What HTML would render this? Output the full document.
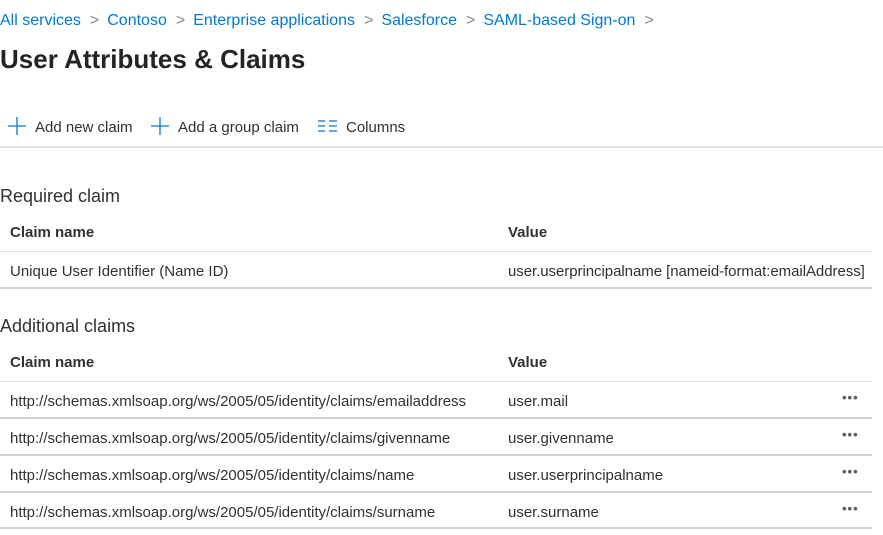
<!DOCTYPE html>
<html><head><meta charset="utf-8"><style>
body{margin:0;width:883px;height:535px;background:#fff;font-family:"Liberation Sans",sans-serif;color:#323130;position:relative;overflow:hidden}
.a{position:absolute;white-space:nowrap;line-height:1}
.bc{top:13px;font-size:16px;color:#0078d4}
.sep{color:#8a8886;margin:0 8px 0 9px}
.t{font-size:15px}
.h{font-size:15px;font-weight:bold}
.l{position:absolute;left:0;width:872px;height:1px;background:#e1dfdd}
.ld{position:absolute;left:0;width:872px;height:2px;background:#d2d0ce}
.dots{position:absolute;left:842px;font-size:13px;letter-spacing:1px;color:#605e5c;font-weight:bold}
</style></head><body>
<div class="a bc" style="left:0">All services<span class="sep">&gt;</span>Contoso<span class="sep">&gt;</span>Enterprise applications<span class="sep">&gt;</span>Salesforce<span class="sep">&gt;</span>SAML-based Sign-on<span class="sep">&gt;</span></div>
<div class="a" style="left:0;top:46px;font-size:26px;font-weight:bold;color:#252423">User Attributes &amp; Claims</div>
<svg class="a" style="left:8px;top:117px" width="18" height="18"><path d="M9 0V18M0 9H18" stroke="#0078d4" stroke-width="1.3"/></svg>
<div class="a t" style="left:35px;top:120px">Add new claim</div>
<svg class="a" style="left:151px;top:117px" width="18" height="18"><path d="M9 0V18M0 9H18" stroke="#0078d4" stroke-width="1.3"/></svg>
<div class="a t" style="left:178px;top:120px">Add a group claim</div>
<svg class="a" style="left:318px;top:120px" width="20" height="12"><path d="M0 1H7M0 6H7M0 11H7M11 1H19M11 6H19M11 11H19" stroke="#0078d4" stroke-width="1.3"/></svg>
<div class="a t" style="left:346px;top:120px">Columns</div>
<div class="ld" style="top:146px;width:883px;background:#e1dfdd"></div>
<div class="a" style="left:0;top:187px;font-size:18px">Required claim</div>
<div class="a h" style="left:10px;top:225px">Claim name</div>
<div class="a h" style="left:508px;top:225px">Value</div>
<div class="l" style="top:251px"></div>
<div class="a t" style="left:10px;top:264px">Unique User Identifier (Name ID)</div>
<div class="a t" style="left:508px;top:264px;letter-spacing:-0.05px">user.userprincipalname [nameid-format:emailAddress]</div>
<div class="ld" style="top:287px"></div>
<div class="a" style="left:0;top:317px;font-size:18px">Additional claims</div>
<div class="a h" style="left:10px;top:355px">Claim name</div>
<div class="a h" style="left:508px;top:355px">Value</div>
<div class="l" style="top:381px"></div>
<div class="a t" style="left:10px;top:394px">http://schemas.xmlsoap.org/ws/2005/05/identity/claims/emailaddress</div>
<div class="a t" style="left:508px;top:394px">user.mail</div>
<div class="a dots" style="top:391px">•••</div>
<div class="ld" style="top:417px"></div>
<div class="a t" style="left:10px;top:431px">http://schemas.xmlsoap.org/ws/2005/05/identity/claims/givenname</div>
<div class="a t" style="left:508px;top:431px">user.givenname</div>
<div class="a dots" style="top:428px">•••</div>
<div class="ld" style="top:454px"></div>
<div class="a t" style="left:10px;top:468px">http://schemas.xmlsoap.org/ws/2005/05/identity/claims/name</div>
<div class="a t" style="left:508px;top:468px">user.userprincipalname</div>
<div class="a dots" style="top:465px">•••</div>
<div class="ld" style="top:491px"></div>
<div class="a t" style="left:10px;top:505px">http://schemas.xmlsoap.org/ws/2005/05/identity/claims/surname</div>
<div class="a t" style="left:508px;top:505px">user.surname</div>
<div class="a dots" style="top:502px">•••</div>
<div class="ld" style="top:527px"></div>
</body></html>
